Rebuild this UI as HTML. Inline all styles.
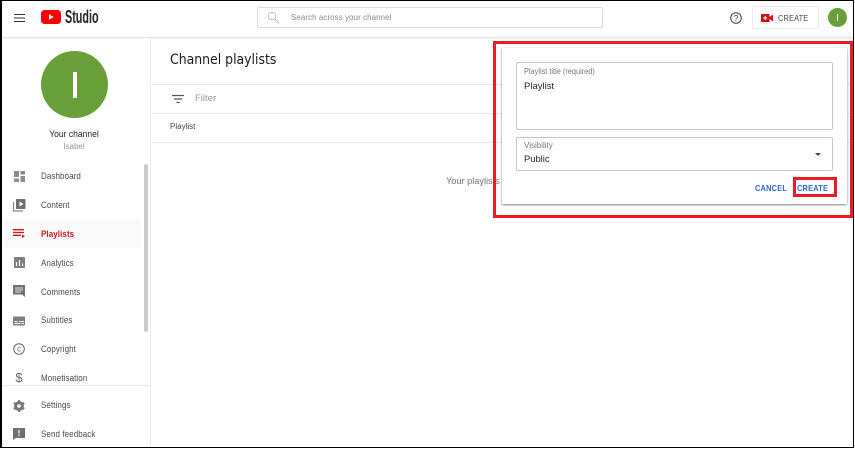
<!DOCTYPE html>
<html><head><meta charset="utf-8"><style>
html,body{margin:0;padding:0;background:#fff}
#p{position:relative;width:855px;height:449px;overflow:hidden;background:#fff;font-family:"Liberation Sans",sans-serif;color:#333}
#p div,#p svg{position:absolute}
.t{white-space:nowrap;line-height:12px}
.n{left:41px;color:#4a4a4a;font:9.2px/12px "Liberation Sans",sans-serif;letter-spacing:.1px;transform:scaleX(.87);transform-origin:0 0}
.i{left:11px;width:16px;height:16px}
.l{background:#e8e8e8;height:1px}
</style></head><body><div id="p">
<div style="left:0;top:37px;width:855px;height:1px;background:#e6e6e6"></div>
<div style="left:0;top:38px;width:855px;height:1px;background:#f3f3f3"></div>
<div style="left:150px;top:38px;width:1px;height:410px;background:#ececec"></div>

<svg style="left:14px;top:13px" width="12" height="9"><path d="M0 1.500h11M0 5h11M0 8.500h11" stroke="#333" stroke-width="1"/></svg>
<svg style="left:41px;top:10px" width="20" height="14"><rect width="20" height="14" rx="3.500" fill="#f00"/><path d="M8 4.200v5.600l4.800-2.800z" fill="#fff"/></svg>
<div class="t" style="left:65px;top:7px;font:bold 18px/20px 'Liberation Sans',sans-serif;color:#222;transform:scaleX(.6);transform-origin:0 0">Studio</div>

<div style="left:257px;top:7px;width:344px;height:19px;border:1px solid #dcdcdc;border-radius:2px"></div>
<svg style="left:267px;top:11px" width="13" height="13"><circle cx="5" cy="5" r="3.800" fill="none" stroke="#bbb" stroke-width="1"/><path d="M8 8l4 4" stroke="#bbb" stroke-width="1.200"/></svg>
<div class="t" style="left:291px;top:11px;font:8.600px/12px 'Liberation Sans',sans-serif;color:#888;letter-spacing:.15px;transform:scaleX(.91);transform-origin:0 0">Search across your channel</div>

<svg style="left:730px;top:12px" width="12" height="12"><circle cx="6" cy="6" r="5.300" fill="none" stroke="#444" stroke-width="1"/><text x="6" y="9" font-size="8.500" font-family="Liberation Sans" text-anchor="middle" fill="#444">?</text></svg>
<div style="left:752px;top:6px;width:65px;height:21px;border:1px solid #ececec;border-radius:2px"></div>
<svg style="left:761px;top:14px" width="12" height="8"><rect width="8.500" height="8" fill="#d0121b"/><path d="M8.500 3L12 .5v7L8.500 5z" fill="#d0121b"/><path d="M4.200 2v4M2.200 4h4" stroke="#fff" stroke-width="1.100"/></svg>
<div class="t" style="left:778px;top:12px;font:8.400px/12px 'Liberation Sans',sans-serif;color:#444;letter-spacing:.2px;transform:scaleX(.88);transform-origin:0 0">CREATE</div>
<div style="left:828px;top:8px;width:19px;height:19px;border-radius:50%;background:#689f38"></div>
<div style="left:837px;top:14px;width:1px;height:7px;background:#fff"></div>

<div style="left:41px;top:51px;width:67px;height:67px;border-radius:50%;background:#689f38"></div>
<div style="left:73px;top:72px;width:4px;height:26px;background:#fff"></div>
<div class="t" style="left:0;width:148px;text-align:center;top:128px;font:9px/12px 'Liberation Sans',sans-serif;color:#222;transform:scaleX(.95);transform-origin:74px 0">Your channel</div>
<div class="t" style="left:0;width:148px;text-align:center;top:141px;font:8px/12px 'Liberation Sans',sans-serif;color:#999">Isabel</div>

<div style="left:3px;top:219px;width:138px;height:29px;background:#f9f9f9"></div>
<div style="left:144px;top:164px;width:4px;height:168px;border-radius:2px;background:#cbcbcb"></div>

<svg class="i" style="top:169px" viewBox="0 0 16 16"><path d="M3 2h5v6H3zM3 9.500h5V13H3zM9.500 2H14v3.500H9.500zM9.500 7H14v6H9.500z" fill="#8c8c8c"/></svg>
<div class="t n" style="top:170px">Dashboard</div>
<svg class="i" style="top:197px" viewBox="0 0 16 16"><path d="M5 2h9.500v10H5z" fill="#707070"/><path d="M8.500 4.500v5l4-2.500z" fill="#fff"/><path d="M2.500 5v9H12" fill="none" stroke="#888" stroke-width="1.200"/></svg>
<div class="t n" style="top:199px">Content</div>
<svg class="i" style="top:227px" viewBox="0 0 16 16"><path d="M2 2.700h11M2 5.500h11M2 8.300h8" stroke="#d4141c" stroke-width="1.300"/><path d="M11 7.500v3.500l3-1.700z" fill="#d4141c"/></svg>
<div class="t n" style="top:228px;color:#cc1a20;font-weight:bold">Playlists</div>
<svg class="i" style="top:256px" viewBox="0 0 16 16"><rect x="3" y="1" width="11" height="11" rx="1" fill="#808080"/><path d="M5.500 6v4M8.500 4v6M11.500 7.500V10" stroke="#fff" stroke-width="1.100"/></svg>
<div class="t n" style="top:257px">Analytics</div>
<svg class="i" style="top:283px" viewBox="0 0 16 16"><path d="M2 2h12v12l-3-2.500H2z" fill="#707070"/><path d="M4 5h8M4 7h8M4 9h6" stroke="#fff" stroke-width=".8"/></svg>
<div class="t n" style="top:286px">Comments</div>
<svg class="i" style="top:313px" viewBox="0 0 16 16"><rect x="2" y="3.500" width="12" height="9" rx="1" fill="#808080"/><path d="M3.500 8.500h3M8 8.500h5M3.500 10.500h6M10.500 10.500h2.500" stroke="#fff" stroke-width=".9"/></svg>
<div class="t n" style="top:314px">Subtitles</div>
<svg class="i" style="top:341px" viewBox="0 0 16 16"><circle cx="8" cy="8" r="5.300" fill="none" stroke="#666" stroke-width="1"/><text x="8" y="10.500" font-size="8" font-family="Liberation Sans" text-anchor="middle" fill="#666">c</text></svg>
<div class="t n" style="top:343px">Copyright</div>
<svg class="i" style="top:369px" viewBox="0 0 16 16"><text x="8" y="13" font-size="13" font-family="Liberation Sans" text-anchor="middle" fill="#666">$</text></svg>
<div class="t n" style="top:372px">Monetisation</div>

<div style="left:2px;top:385px;width:148px;height:62px;background:#fff"></div>
<div class="l" style="left:2px;top:385px;width:149px"></div>
<svg class="i" style="top:398px" viewBox="0 0 16 16"><circle cx="8" cy="8" r="3.600" fill="none" stroke="#777" stroke-width="2.600"/><path d="M8 2v12M2.800 5l10.400 6M2.800 11l10.400-6" stroke="#777" stroke-width="2.200"/><circle cx="8" cy="8" r="1.800" fill="#fff"/></svg>
<div class="t n" style="top:399px">Settings</div>
<svg class="i" style="top:425px" viewBox="0 0 16 16"><path d="M2 3h12v10H5l-3 2z" fill="#707070"/><path d="M8 5v3.500M8 9.500v1.500" stroke="#fff" stroke-width="1.200"/></svg>
<div class="t n" style="top:428px">Send feedback</div>

<div class="t" style="left:170px;top:51px;font:14.500px/19px 'DejaVu Sans',sans-serif;color:#1a1a1a;transform:scaleX(.86);transform-origin:0 0">Channel playlists</div>
<div class="l" style="left:151px;top:84px;width:704px"></div>
<svg style="left:171px;top:94px" width="14" height="10"><path d="M1 1.500h12M3 5h8M5.500 8.500h3" stroke="#555" stroke-width="1.200"/></svg>
<div class="t" style="left:195px;top:93px;font:9.500px/12px 'Liberation Sans',sans-serif;color:#999">Filter</div>
<div class="l" style="left:151px;top:113px;width:704px"></div>
<div class="t" style="left:170px;top:121px;font:8px/12px 'Liberation Sans',sans-serif;color:#445">Playlist</div>
<div class="l" style="left:151px;top:142px;width:704px"></div>
<div class="t" style="left:446px;top:175px;font:9.200px/12px 'Liberation Sans',sans-serif;color:#777">Your playlists</div>

<div style="left:502px;top:48px;width:345px;height:156px;background:#fff;box-shadow:0 1px 2px rgba(0,0,0,.45),0 0 2px rgba(0,0,0,.1)"></div>
<div style="left:516px;top:62px;width:315px;height:66px;border:1px solid #c6c6c6;border-radius:2px"></div>
<div class="t" style="left:524px;top:66px;font:8.100px/12px 'Liberation Sans',sans-serif;color:#777;transform:scaleX(.91);transform-origin:0 0">Playlist title (required)</div>
<div class="t" style="left:524px;top:81px;font:9.500px/12px 'Liberation Sans',sans-serif;color:#222">Playlist</div>
<div style="left:516px;top:137px;width:315px;height:32px;border:1px solid #c6c6c6;border-radius:2px"></div>
<div class="t" style="left:524px;top:140px;font:8px/12px 'Liberation Sans',sans-serif;color:#777">Visibility</div>
<div class="t" style="left:524px;top:153px;font:9.400px/12px 'Liberation Sans',sans-serif;color:#222">Public</div>
<svg style="left:815px;top:153px" width="6" height="3"><path d="M0 0h6L3 3z" fill="#444"/></svg>
<div class="t" style="left:755px;top:182px;font:bold 8.300px/12px 'Liberation Sans',sans-serif;color:#2a66d0;letter-spacing:.25px;transform:scaleX(.89);transform-origin:0 0">CANCEL</div>
<div class="t" style="left:797px;top:182px;font:bold 8.300px/12px 'Liberation Sans',sans-serif;color:#2a66d0;letter-spacing:.25px;transform:scaleX(.89);transform-origin:0 0">CREATE</div>

<div style="left:493px;top:41px;width:354px;height:171px;border:3px solid #ed1c24"></div>
<div style="left:793px;top:177px;width:38px;height:14px;border:3px solid #ed1c24"></div>

<div style="left:0;top:0;width:851px;height:446px;border:1px solid #000;border-left-width:2px"></div>
</div></body></html>
